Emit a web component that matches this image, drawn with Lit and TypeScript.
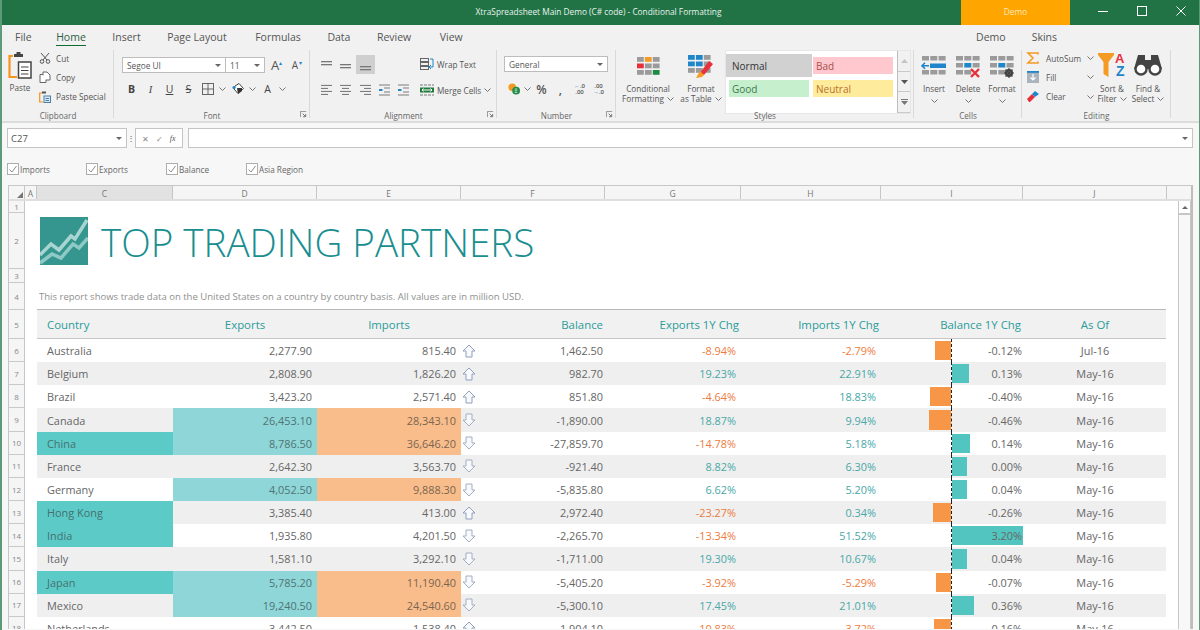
import { LitElement, html, css, svg } from "lit";
import { customElement } from "lit/decorators.js";

const G = "#9b9b9b", B = "#1f86c9", O = "#f59a23", R = "#e8303a", N = "#1e8a45";

function cells(colors: string[][], x = 0, y = 0, w = 7, h = 5, gx = 1.2, gy = 1.6) {
  return colors.map((row, r) => row.map((c, i) =>
    c ? svg`<rect x=${x + i * (w + gx)} y=${y + r * (h + gy)} width=${w} height=${h} fill=${c}></rect>` : ""));
}
const chev = html`<svg class="chev" viewBox="0 0 7 4"><path d="M.5.5 3.5 3.5 6.5.5" fill="none" stroke="#666" stroke-width=".9"/></svg>`;
const launcher = html`<svg class="launch" viewBox="0 0 8 8"><path d="M.5 7V.5H7" fill="none" stroke="#888"/><path d="M3 3l3 3M6.5 3.5v3h-3" fill="none" stroke="#666"/></svg>`;
const drop = html`<svg class="drop" viewBox="0 0 6 3"><path d="M0 0h6L3 3z" fill="#666"/></svg>`;

function alignIcon(kind: string) {
  const ys = [1.5, 4.5, 7.5, 10.5];
  const w = [11, 7, 11, 7];
  return html`<svg class="a11" viewBox="0 0 11 12">${ys.map((y, i) => {
    const x = kind === "l" ? 0 : kind === "r" ? 11 - w[i] : (11 - w[i]) / 2;
    return svg`<rect x=${x} y=${y - .6} width=${w[i]} height="1.1" fill="#7d7d7d"></rect>`;
  })}</svg>`;
}
function vAlign(y: number) {
  return html`<svg class="a11" viewBox="0 0 11 12"><rect x="0" y=${y} width="11" height="1.3" fill="#777"></rect><rect x="0" y=${y + 3} width="11" height="1.3" fill="#777"></rect></svg>`;
}
const indentIcon = html`<svg class="a11" viewBox="0 0 11 12"><path d="M0 1h11M0 11h11M5 4h6M5 8h6" stroke="#7d7d7d"/><path d="M0 6h3.500" stroke="#1f86c9" stroke-width="2"/></svg>`;

const icons = {
  paste: html`<svg class="paste" viewBox="0 0 24 27"><path d="M5 4H1.500v21H9" fill="none" stroke="#f7941d" stroke-width="2.200"/><path d="M6 5V2h2.500V0h4v2H15v3z" fill="#444"/><rect x="10.500" y="10" width="12.500" height="16" fill="#fff" stroke="#444" stroke-width="1.500"/><path d="M13 15h7.500M13 18.500h7.500M13 22h7.500" stroke="#444" stroke-width="1.200"/></svg>`,
  cut: html`<svg class="i12" viewBox="0 0 12 12"><path d="M2 1l6 7M10 1L4 8" stroke="#555" fill="none"/><circle cx="3" cy="9.500" r="1.800" fill="none" stroke="#555"/><circle cx="9" cy="9.500" r="1.800" fill="none" stroke="#555"/></svg>`,
  copy: html`<svg class="i12" viewBox="0 0 12 12"><path d="M4 1h4l3 3v5H4z" fill="#fff" stroke="#666"/><path d="M4 3.500H1v8h6V9" fill="#fff" stroke="#666"/></svg>`,
  pasteS: html`<svg class="i12" viewBox="0 0 12 12"><path d="M3 2H.7v9H4" fill="none" stroke="#f7941d" stroke-width="1.200"/><rect x="3" y=".5" width="4" height="2" fill="#555"/><rect x="5" y="5" width="6.500" height="6.500" fill="#d7e9f6" stroke="#4c7fa6"/><path d="M6.500 7.500h3.500M6.500 9.500h3.500" stroke="#4c7fa6"/></svg>`,
  borders: html`<svg class="i12" viewBox="0 0 12 12"><rect x=".5" y=".5" width="11" height="11" fill="none" stroke="#666"/><path d="M6 .5v11M.5 6h11" stroke="#666"/></svg>`,
  fill: html`<svg class="i12" viewBox="0 0 12 12"><path d="M3 3l4-2.500 4.500 5L6 10.500 2 6z" fill="#fff" stroke="#444"/><path d="M5 5h5v3l-4 3z" fill="#333"/><circle cx="2" cy="4.500" r="1.600" fill="#1f86c9"/></svg>`,
  wrap: html`<svg class="i14" viewBox="0 0 14 12"><rect x=".5" y=".5" width="8" height="3" fill="none" stroke="#666"/><rect x=".5" y="4.500" width="8" height="3" fill="none" stroke="#666"/><rect x=".5" y="8.500" width="8" height="3" fill="none" stroke="#666"/><path d="M10 1h3v8H9.500" fill="none" stroke="#1f86c9"/><path d="M11 7l-2 2 2 2" fill="none" stroke="#1f86c9"/></svg>`,
  merge: html`<svg class="i14" viewBox="0 0 14 12"><path d="M0 1h14M0 11h14" stroke="#777" stroke-dasharray="3 1"/><rect x="0" y="3.500" width="14" height="5" fill="#1e7d3d"/><path d="M3 6h8" stroke="#fff"/><path d="M3.500 4.500L2 6l1.500 1.500M10.500 4.500L12 6l-1.500 1.500" fill="none" stroke="#fff"/></svg>`,
  money: html`<svg class="i14" viewBox="0 0 14 14"><circle cx="5" cy="5" r="4.500" fill="#f59a23"/><circle cx="9.500" cy="9" r="4.500" fill="#1e8a45"/><path d="M7.800 7h3M7.800 9h3M7.800 11h3" stroke="#fff" stroke-width=".8"/></svg>`,
  cond: html`<svg class="big" viewBox="0 0 26 24"><g>${cells([[G, O, G], [R, G, G], [G, G, N]], 2, 3, 6.800, 4.800, 1.100, 1.700)}</g></svg>`,
  table: html`<svg class="big" viewBox="0 0 26 24"><g>${cells([[B, B, G], [B, B, G], [G, G, G]], 0, 1, 6.800, 4.800, 1.100, 1.700)}</g><path d="M12 19l9-12 4 3-9 11z" fill="#e8303a"/><path d="M12 17l4 4-2 2-6 1z" fill="#f59a23"/></svg>`,
  insert: html`<svg class="big" viewBox="0 0 26 24"><g>${cells([[G, G, G], ["", "", ""], [G, G, G]], 1, 2, 7, 4.500, 1.300, 2.500)}</g><rect x="9" y="9.500" width="16" height="4.500" fill="#1f86c9"/><path d="M1 11.800h7M4 8.800l-3 3 3 3" fill="none" stroke="#1f86c9" stroke-width="1.600"/></svg>`,
  del: html`<svg class="big" viewBox="0 0 26 24"><g>${cells([[G, G, G], [G, B, G], [G, G, ""]], 1, 2, 7, 4.500, 1.300, 2.500)}</g><path d="M16 15l8 8M24 15l-8 8" stroke="#e8303a" stroke-width="2.400"/></svg>`,
  fmt: html`<svg class="big" viewBox="0 0 26 24"><g>${cells([[G, G, G], [G, B, G], [G, G, ""]], 1, 2, 7, 4.500, 1.300, 2.500)}</g><circle cx="20" cy="19" r="3" fill="none" stroke="#444" stroke-width="2.200"/><path d="M20 14v10M15 19h10M16.500 15.500l7 7M23.500 15.500l-7 7" stroke="#444" stroke-width="1.200"/></svg>`,
  sum: html`<svg class="i14" viewBox="0 0 14 12"><path d="M12 2.500V1H2l5 5-5 5h10V9.500" fill="none" stroke="#f59a23" stroke-width="1.600"/></svg>`,
  fillD: html`<svg class="i14" viewBox="0 0 14 12"><rect x="1" y="0" width="12" height="12" fill="#a9b4bd"/><rect x="1" y="0" width="12" height="1.800" fill="#1f86c9"/><path d="M7 3v6M4.500 6.500 7 9l2.500-2.500" fill="none" stroke="#fff" stroke-width="1.200"/></svg>`,
  clear: html`<svg class="i14" viewBox="0 0 14 12"><path d="M1 8l5-5 3 3-5 5H3z" fill="#e8303a"/><path d="M6 3l3-3 4 3-4 3z" fill="#1f86c9"/></svg>`,
  sort: html`<svg class="big-w" viewBox="0 0 28 26"><path d="M0 0h16v2l-5.500 7v15l-5-3V9L0 2z" fill="#f59a23" transform="translate(0 1)"/><text x="17" y="11" class="sa">A</text><text x="18" y="24" class="sz">Z</text></svg>`,
  find: html`<svg class="big-w" viewBox="0 0 28 26"><path d="M4 3h7v5h6V3h7l4 14H0z" fill="#444"/><circle cx="7" cy="17" r="5.500" fill="#fff" stroke="#444" stroke-width="2.400"/><circle cx="21" cy="17" r="5.500" fill="#fff" stroke="#444" stroke-width="2.400"/></svg>`,
  logo: html`<svg class="logo" viewBox="0 0 48 48"><rect width="48" height="48" fill="#35968f"/><path d="M0 38l11-11 8 6L31 19l4 3L47 3" fill="none" stroke="#a8d5d2" stroke-width="3.500"/><path d="M0 46l12-9 9 4 12-14 6 4 9-10" fill="none" stroke="#8fc9c5" stroke-width="3.500"/></svg>`,
  up: html`<svg class="arr" viewBox="0 0 14 14"><path d="M7 1l6 6h-3v6H4V7H1z" fill="#f7f9fc" stroke="#8fa0bd"/></svg>`,
  down: html`<svg class="arr" viewBox="0 0 14 14"><path d="M7 13l6-6h-3V1H4v6H1z" fill="#f7f9fc" stroke="#a3aec2"/></svg>`,
  check: html`<svg viewBox="0 0 12 12" class="ck"><rect x=".5" y=".5" width="11" height="11" fill="#fff" stroke="#adadad"/><path d="M2.500 6.500 5 9l4.500-6" fill="none" stroke="#8c8c8c"/></svg>`,
};

type Row = [string, string, string, boolean, string, string, string, string, string];
const DATA: Row[] = [
  ["Australia", "2,277.90", "815.40", true, "1,462.50", "-8.94%", "-2.79%", "-0.12%", "Jul-16"],
  ["Belgium", "2,808.90", "1,826.20", true, "982.70", "19.23%", "22.91%", "0.13%", "May-16"],
  ["Brazil", "3,423.20", "2,571.40", true, "851.80", "-4.64%", "18.83%", "-0.40%", "May-16"],
  ["Canada", "26,453.10", "28,343.10", false, "-1,890.00", "18.87%", "9.94%", "-0.46%", "May-16"],
  ["China", "8,786.50", "36,646.20", false, "-27,859.70", "-14.78%", "5.18%", "0.14%", "May-16"],
  ["France", "2,642.30", "3,563.70", false, "-921.40", "8.82%", "6.30%", "0.00%", "May-16"],
  ["Germany", "4,052.50", "9,888.30", false, "-5,835.80", "6.62%", "5.20%", "0.04%", "May-16"],
  ["Hong Kong", "3,385.40", "413.00", true, "2,972.40", "-23.27%", "0.34%", "-0.26%", "May-16"],
  ["India", "1,935.80", "4,201.50", false, "-2,265.70", "-13.34%", "51.52%", "3.20%", "May-16"],
  ["Italy", "1,581.10", "3,292.10", false, "-1,711.00", "19.30%", "10.67%", "0.04%", "May-16"],
  ["Japan", "5,785.20", "11,190.40", false, "-5,405.20", "-3.92%", "-5.29%", "-0.07%", "May-16"],
  ["Mexico", "19,240.50", "24,540.60", false, "-5,300.10", "17.45%", "21.01%", "0.36%", "May-16"],
  ["Netherlands", "3,442.50", "1,538.40", true, "1,904.10", "-10.83%", "-3.72%", "-0.16%", "May-16"],
];
const TEAL_C = new Set(["China", "Hong Kong", "India", "Japan"]);
const HOT = new Set(["Canada", "China", "Germany", "Japan", "Mexico"]);
const BAR: Record<string, number> = { Australia: -16, Belgium: 17, Brazil: -21, Canada: -22, China: 18, France: 15, Germany: 15, "Hong Kong": -18, India: 71, Italy: 15, Japan: -15, Mexico: 22, Netherlands: -17 };

@customElement("app-root")
export class AppRoot extends LitElement {
  static styles = css`
    :host { display: block; width: 1200px; height: 630px; overflow: hidden; font-family: "Open Sans", "Noto Sans", sans-serif; color: #555; background: #f7f7f7; }
    * { box-sizing: border-box; }
    svg { display: block; flex: none; }
    .app { width: 1200px; height: 630px; display: flex; flex-direction: column; border-left: 2px solid #5d9a79; border-right: 1px solid #5d9a79; overflow: hidden; }
    .titlebar { height: 25px; flex: none; margin: 0 -1px 0 -2px; background: #217346; color: #e8f3ec; display: flex; font-size: 8.300px; }
    .ttl { width: 961px; padding: 0 0 3px 236px; display: flex; align-items: center; justify-content: center; white-space: nowrap; }
    .demo { width: 109px; background: #ffa500; color: #fde7bd; display: flex; align-items: center; justify-content: center; padding-bottom: 3px; }
    .winbtns { flex: 1; display: grid; grid-template-columns: repeat(3, 39px); justify-items: center; align-items: center; padding: 0 0 3px 13px; }
    .winbtns svg { width: 10px; height: 10px; }
    .tabs { height: 25px; flex: none; background: #f1f1f1; display: flex; align-items: flex-start; padding: 4px 0 0 13px; gap: 26.500px; font-size: 10.500px; color: #555; }
    .tab { height: 18px; line-height: 16px; white-space: nowrap; }
    .tab.on { color: #2f5e45; border-bottom: 1.500px solid #0c6b2d; height: 17px; margin-left: -2px; }
    .tab.mr { margin-left: 2px; }
    .tabsr { margin-left: auto; display: flex; gap: 26px; margin-right: 142px; }
    .ribbon { height: 73px; flex: none; background: #f1f1f1; border-bottom: 2px solid #dcdcdc; display: flex; font-size: 8.200px; }
    .grp { position: relative; display: flex; flex-direction: column; flex: none; }
    .grp::after { content: ""; position: absolute; right: 0; top: 0; height: 68px; width: 1px; background: #d9d9d9; }
    .gb { height: 60px; display: flex; flex: none; }
    .gl { text-align: center; font-size: 8.100px; color: #666; line-height: 12px; }
    .launch { position: absolute; right: 3px; bottom: 3px; width: 7px; height: 7px; }
    .g1 { width: 112px; } .g2 { width: 196px; } .g3 { width: 187px; } .g4 { width: 119px; } .g5 { width: 298px; } .g6 { width: 108px; } .g7 { width: 149px; }
    .bigbtn { display: flex; flex-direction: column; align-items: center; line-height: 10px; text-align: center; white-space: nowrap; }
    .bl { display: flex; align-items: center; gap: 3px; justify-content: center; }
    .paste { width: 24px; height: 27px; margin-top: 2px; }
    .big { width: 26px; height: 24px; margin-top: 4px; }
    .big-w { width: 28px; height: 26px; margin-top: 2px; overflow: visible; }
    .bt { margin-top: 6px; }
    .bt2 { margin-top: 5px; }
    .chev { width: 7px; height: 4px; }
    .i12 { width: 12px; height: 12px; } .i14 { width: 14px; height: 12px; } .a11 { width: 11px; height: 12px; }
    .g1 .gb { padding-left: 6px; }
    .pastebtn { width: 24px; } .pastebtn .bt { margin-top: 4px; }
    .smallcol { margin-left: 7px; display: flex; flex-direction: column; padding-top: 2px; gap: 7.300px; }
    .sm { display: flex; align-items: center; gap: 5px; height: 12px; white-space: nowrap; }
    .g2 .gb { flex-direction: column; padding: 7px 0 0 8px; }
    .rowf { display: flex; align-items: center; }
    .combo { height: 16px; background: #fff; border: 1px solid #bdbdbd; display: flex; align-items: center; justify-content: space-between; padding: 0 4px; font-size: 8.300px; color: #555; }
    .drop { width: 6px; height: 3px; }
    .c1 { width: 104px; } .c2 { width: 40px; margin-left: -1px; } .c3 { width: 104px; }
    .ga { font-size: 13px; width: 20px; text-align: center; color: #555; line-height: 16px; position: relative; }
    .ga1 { margin-left: 0; } .ga2 { font-size: 10px; }
    .ga sup { position: absolute; font-size: 6px; color: #1f86c9; top: -2px; right: 3px; }
    .row2f { margin-top: 9px; height: 14px; }
    .tb { width: 19px; display: flex; justify-content: center; align-items: center; font-size: 10.500px; color: #444; flex: none; }
    .tb.b { font-weight: 700; } .tb.it { font-style: italic; font-family: "Liberation Serif", serif; } .tb.u { text-decoration: underline; } .tb.s { text-decoration: line-through; }
    .tc { width: 9px; display: flex; justify-content: center; flex: none; }
    .g2 .tc { width: 11px; }
    .g3 .gb { padding: 5px 0 0 7px; gap: 28px; }
    .agrid { display: grid; grid-template-columns: repeat(5, 19.300px); grid-template-rows: 19px 19px; row-gap: 6px; width: 96px; justify-items: center; align-items: center; height: 45px; }
    .agrid .sel { width: 19px; height: 19px; background: #cfcfcf; display: flex; justify-content: center; align-items: center; }
    .acol { display: flex; flex-direction: column; gap: 14px; padding-top: 3px; margin-left: -21px; }
    .acol .sm { gap: 3px; }
    .g4 .gb { flex-direction: column; padding: 6px 0 0 7px; }
    .nrow { margin-top: 10px; height: 14px; display: flex; align-items: center; font-size: 12px; color: #555; }
    .nb { width: 19px; display: flex; justify-content: center; font-weight: 600; flex: none; }
    .dec { font-size: 6px; line-height: 6.500px; text-align: center; color: #555; font-weight: 600; }
    .dec b { color: #1f86c9; }
    .g5 .gb { height: 63px; padding-left: 4px; }
    .g5 .gl { margin-top: -3px; }
    .b55 { width: 56px; } .b50 { width: 50px; }
    .gallery { width: 186px; height: 64px; background: #fff; margin: 0 0 0 -1px; display: flex; flex: none; border: 1px solid #e6e6e6; }
    .swatches { width: 172px; display: grid; grid-template-columns: 86px 80px; grid-template-rows: 26px 20px; padding-top: 3px; column-gap: 1px; }
    .sw { font-size: 10px; display: flex; align-items: center; padding-left: 3px; margin: 3px 0 3px 0; height: 17px; }
    .sw.n { background: #d1d1d1; color: #333; margin: 0; height: 23px; padding-left: 6px; }
    .sw.ba { background: #ffc7ce; color: #a9504d; }
    .sw.go { background: #c6efce; color: #3d7a4a; margin: 0 0 0 3px; width: 80px; }
    .sw.ne { background: #ffeb9c; color: #b4712a; margin: 0; }
    .gscroll { width: 13px; margin-left: 0; display: flex; flex-direction: column; border-left: 1px solid #bdbdbd; background: #f1f1f1; }
    .gs { flex: 1; display: flex; justify-content: center; align-items: center; border-bottom: 1px solid #c9c9c9; }
    .gs svg { width: 7px; height: 6px; }
    .g6 .gb { padding-left: 3px; }
    .b34 { width: 34px; }
    .g7 .gb { padding-left: 2px; }
    .editcol { width: 70px; display: flex; flex-direction: column; gap: 7.300px; padding-top: 2px; padding-left: 2px; }
    .editcol .sm { gap: 6px; }
    .editcol .lab { width: 35px; }
    .b36 { width: 36px; }
    .sa { font: 700 13px "Liberation Sans", sans-serif; fill: #e8303a; }
    .sz { font: 700 14px "Liberation Sans", sans-serif; fill: #1f86c9; }
    .fbar { height: 32px; flex: none; display: flex; align-items: flex-start; padding: 5px 6px 0 5px; background: #f7f7f7; }
    .fbox { height: 20px; background: #fff; border: 1px solid #c4c4c4; display: flex; align-items: center; }
    .name { width: 120px; padding: 0 4px 0 3px; justify-content: space-between; font-size: 9.500px; }
    .dots { width: 8px; color: #555; font-size: 8px; text-align: center; line-height: 20px; }
    .fx { width: 48px; justify-content: space-around; padding: 0 3px; color: #888; font-size: 8px; }
    .fx i { font-family: "Liberation Serif", serif; color: #555; }
    .input { flex: 1; margin-left: 5px; justify-content: flex-end; padding-right: 4px; }
    .checks { height: 30px; flex: none; display: flex; padding: 8px 0 0 5px; font-size: 8.200px; color: #666; background: #f7f7f7; }
    .chk { display: flex; align-items: center; gap: 1px; height: 12px; flex: none; }
    .ck { width: 12px; height: 12px; }
    .w78 { width: 79px; } .w80 { width: 80px; }
    .sheet { margin-left: 6px; width: 1185px; height: 444px; flex: none; display: flex; flex-direction: column; overflow: hidden; border-left: 1px solid #c6c6c6; border-right: 2px solid #bdbdbd; border-top: 1px solid #c6c6c6; background: #fff; }
    .gridcols { display: grid; grid-template-columns: 16px 12px 136px 144px 144px 144px 136px 140px 142px 144px 1fr; }
    .colh { height: 15px; flex: none; background: #f5f5f5; border-bottom: 2px solid #dfdfdf; font-size: 8.500px; color: #777; text-align: center; line-height: 15px; }
    .colh > div { border-right: 1px solid #c6c6c6; height: 13px; }
    .colh > div:last-child { border-right: 0; }
    .colh .on { background: #e2e2e2; }
    .corner { position: relative; }
    .corner svg { position: absolute; right: 1px; bottom: 1px; width: 6px; height: 6px; }
    .sbody { flex: 1; display: flex; min-height: 0; position: relative; }
    .rows { flex: 1; min-width: 0; overflow: hidden; }
    .r { display: grid; grid-template-columns: 16px 12px 136px 144px 144px 144px 136px 140px 142px 144px; }
    .rh { background: #f5f5f5; border-right: 1px solid #c6c6c6; border-bottom: 1px solid #c9c9c9; color: #888; font-size: 8px; display: flex; align-items: center; justify-content: center; }
    .r1 { height: 12px; } .r2 { height: 56px; } .r3 { height: 14px; } .r4 { height: 27px; } .r5 { height: 29px; }
    .titlewrap { grid-column: 2 / -1; display: flex; align-items: center; padding-left: 15px; gap: 13px; }
    .logo { width: 48px; height: 48px; }
    .bigt { font-size: 38.600px; font-weight: 300; color: #188e91; white-space: nowrap; line-height: 48px; padding-top: 1px; }
    .desc { grid-column: 2 / -1; padding-left: 14px; font-size: 9.540px; color: #8f8f8f; display: flex; align-items: center; white-space: nowrap; position: relative; }
    .desc::after { content: ""; position: absolute; left: 12px; right: 0; bottom: 0; height: 1.500px; background: #b8b8b8; }
    .hcell { background: #f1f1f1; border-bottom: 1.500px solid #c6c6c6; color: #2a9c99; font-size: 11.400px; font-weight: 500; display: flex; align-items: center; white-space: nowrap; padding-top: 1px; }
    .hcell.c { justify-content: center; } .hcell.e { justify-content: flex-end; padding-right: 2px; }
    .hcell.l { padding-left: 10px; }
    .dr { height: 23.170px; font-size: 10.900px; color: #666; }
    .dr .d { display: flex; align-items: center; white-space: nowrap; background: #fff; padding-right: 5px; justify-content: flex-end; position: relative; }
    .dr.alt .d { background: #efefef; }
    .dr .d.cty { justify-content: flex-start; padding-left: 10px; padding-right: 0; }
    .dr .d.cen { justify-content: center; padding: 0; }
    .dr .d.ctyhot { background: #5ccbc8; color: #44706f; }
    .dr .d.dh { background: #8fd6d8; color: #4e7473; }
    .dr .d.eh { background: #f9bd8b; color: #7a6550; }
    .dr .d.bal { padding-right: 2px; justify-content: space-between; }
    .arr { width: 14px; height: 14px; margin-left: 1px; }
    .neg { color: #ee7a3c !important; } .pos { color: #48a7a7 !important; }
    .bar { position: absolute; top: 2px; bottom: 2px; background: #52c5c0; }
    .bar.n { background: #f79646; }
    .axis { position: absolute; top: 0; bottom: 0; left: 70px; width: 0; border-left: 1px dashed #222; }
    .dr .d.i { padding-right: 1px; }
    .dr .t { position: relative; }
    .vs { width: 13px; flex: none; border-left: 1px solid #c6c6c6; border-right: 1px solid #c6c6c6; background: #f8f8f8; }
    .vsb { height: 14px; background: #fff; border-bottom: 2px solid #c6c6c6; display: flex; align-items: center; justify-content: center; }
    .vsb svg { width: 6px; height: 3px; }
    .gutter { width: 12px; flex: none; background: #fff; }
  `;

  private cols() {
    return ["", "A", "C", "D", "E", "F", "G", "H", "I", "J", ""];
  }

  render() {
    return html`<div class="app">
      <div class="titlebar">
        <div class="ttl">XtraSpreadsheet Main Demo (C# code) - Conditional Formatting</div>
        <div class="demo">Demo</div>
        <div class="winbtns">
          <svg viewBox="0 0 10 10"><path d="M0 5.500h10" stroke="#fff"/></svg>
          <svg viewBox="0 0 10 10"><rect x=".5" y=".5" width="9" height="9" fill="none" stroke="#fff"/></svg>
          <svg viewBox="0 0 10 10"><path d="M.5.5l9 9M9.500.5l-9 9" stroke="#fff"/></svg>
        </div>
      </div>
      <div class="tabs">
        <div class="tab">File</div><div class="tab on">Home</div><div class="tab">Insert</div><div class="tab">Page Layout</div>
        <div class="tab mr">Formulas</div><div class="tab">Data</div><div class="tab">Review</div><div class="tab mr">View</div>
        <div class="tabsr"><div class="tab">Demo</div><div class="tab">Skins</div></div>
      </div>
      ${this.ribbon()}
      <div class="fbar">
        <div class="fbox name"><span>C27</span>${drop}</div>
        <div class="dots">⋮</div>
        <div class="fbox fx"><span>✕</span><span>✓</span><i>fx</i></div>
        <div class="fbox input">${drop}</div>
      </div>
      <div class="checks">
        <div class="chk w78">${icons.check}Imports</div>
        <div class="chk w80">${icons.check}Exports</div>
        <div class="chk w80">${icons.check}Balance</div>
        <div class="chk">${icons.check}Asia Region</div>
      </div>
      <div class="sheet">
        <div class="colh gridcols">
          ${this.cols().map((c, i) => html`<div class=${i === 2 ? "on" : i === 0 ? "corner" : ""}>${i === 0 ? html`<svg viewBox="0 0 6 6"><path d="M6 0v6H0z" fill="#777"/></svg>` : c}</div>`)}
        </div>
        <div class="sbody">
          <div class="rows">
            <div class="r r1"><div class="rh">1</div></div>
            <div class="r r2"><div class="rh">2</div><div class="titlewrap">${icons.logo}<div class="bigt">TOP TRADING PARTNERS</div></div></div>
            <div class="r r3"><div class="rh">3</div></div>
            <div class="r r4"><div class="rh">4</div><div class="desc">This report shows trade data on the United States on a country by country basis. All values are in million USD.</div></div>
            <div class="r r5"><div class="rh">5</div><div></div>
              <div class="hcell l">Country</div><div class="hcell c">Exports</div><div class="hcell c">Imports</div>
              <div class="hcell e">Balance</div><div class="hcell e">Exports 1Y Chg</div><div class="hcell e">Imports 1Y Chg</div>
              <div class="hcell e">Balance 1Y Chg</div><div class="hcell c">As Of</div>
            </div>
            ${DATA.map((d, i) => this.dataRow(d, i))}
          </div>
          <div class="gutter"></div>
          <div class="vs"><div class="vsb"><svg viewBox="0 0 6 3"><path d="M0 3h6L3 0z" fill="#666"/></svg></div></div>
        </div>
      </div>
    </div>`;
  }

  private dataRow(d: Row, i: number) {
    const [name, ex, im, up, bal, e1, i1, b1, as] = d;
    const hot = HOT.has(name);
    const w = BAR[name];
    const pc = (v: string) => (v.startsWith("-") ? "neg" : "pos");
    return html`<div class="r dr ${i % 2 ? "alt" : ""}">
      <div class="rh">${i + 6}</div><div></div>
      <div class="d cty ${TEAL_C.has(name) ? "ctyhot" : ""}">${name}</div>
      <div class="d ${hot ? "dh" : ""}">${ex}</div>
      <div class="d ${hot ? "eh" : ""}">${im}</div>
      <div class="d bal">${up ? icons.up : icons.down}<span>${bal}</span></div>
      <div class="d ${pc(e1)}">${e1}</div>
      <div class="d ${pc(i1)}">${i1}</div>
      <div class="d i">
        <div class="bar ${w < 0 ? "n" : ""}" style="left:${w < 0 ? 70 + w : 71}px;width:${Math.abs(w)}px"></div>
        <div class="axis"></div>
        <span class="t">${b1}</span>
      </div>
      <div class="d cen">${as}</div>
    </div>`;
  }

  private ribbon() {
    const big = (ic: unknown, a: string, b: string, cls: string, arrowOnly = false) => html`<div class="bigbtn ${cls}">${ic}
      <div class="bt">${a}</div>${arrowOnly ? html`<div class="bl bt2">${chev}</div>` : html`<div class="bl">${b} ${chev}</div>`}</div>`;
    return html`<div class="ribbon">
      <div class="grp g1">
        <div class="gb">
          <div class="bigbtn pastebtn">${icons.paste}<div class="bt">Paste</div></div>
          <div class="smallcol">
            <div class="sm">${icons.cut}Cut</div>
            <div class="sm">${icons.copy}Copy</div>
            <div class="sm">${icons.pasteS}Paste Special</div>
          </div>
        </div>
        <div class="gl">Clipboard</div>
      </div>
      <div class="grp g2">
        <div class="gb">
          <div class="rowf">
            <div class="combo c1">Segoe UI${drop}</div>
            <div class="combo c2">11${drop}</div>
            <div class="ga ga1">A<sup>▴</sup></div><div class="ga ga2">A<sup>▾</sup></div>
          </div>
          <div class="rowf row2f">
            <div class="tb b">B</div><div class="tb it">I</div><div class="tb u">U</div><div class="tb s">S</div>
            <div class="tb">${icons.borders}</div><div class="tc">${chev}</div>
            <div class="tb">${icons.fill}</div><div class="tc">${chev}</div>
            <div class="tb">A</div><div class="tc">${chev}</div>
          </div>
        </div>
        <div class="gl">Font</div>${launcher}
      </div>
      <div class="grp g3">
        <div class="gb">
          <div class="agrid">
            ${vAlign(2)}${vAlign(5)}<div class="sel">${vAlign(7)}</div><span></span><span></span>
            ${alignIcon("l")}${alignIcon("c")}${alignIcon("r")}${indentIcon}${indentIcon}
          </div>
          <div class="acol">
            <div class="sm">${icons.wrap}Wrap Text</div>
            <div class="sm">${icons.merge}Merge Cells ${chev}</div>
          </div>
        </div>
        <div class="gl">Alignment</div>${launcher}
      </div>
      <div class="grp g4">
        <div class="gb">
          <div class="combo c3">General${drop}</div>
          <div class="nrow">
            <div class="nb">${icons.money}</div><div class="tc">${chev}</div>
            <div class="nb">%</div><div class="nb">,</div>
            <div class="nb dec"><div><b>←</b>.0<br/>.00</div></div>
            <div class="nb dec"><div>.00<br/><b>→</b>.0</div></div>
          </div>
        </div>
        <div class="gl">Number</div>${launcher}
      </div>
      <div class="grp g5">
        <div class="gb">
          ${big(icons.cond, "Conditional", "Formatting", "b55")}
          ${big(icons.table, "Format", "as Table", "b50")}
          <div class="gallery">
            <div class="swatches">
              <div class="sw n">Normal</div><div class="sw ba">Bad</div>
              <div class="sw go">Good</div><div class="sw ne">Neutral</div>
            </div>
            <div class="gscroll">
              <div class="gs"><svg viewBox="0 0 7 6"><path d="M0 5h7L3.500 1z" fill="#c4c4c4"/></svg></div>
              <div class="gs"><svg viewBox="0 0 7 6"><path d="M0 1h7L3.500 5z" fill="#555"/></svg></div>
              <div class="gs"><svg viewBox="0 0 7 6"><path d="M0 0h7v1H0zM0 2h7L3.500 6z" fill="#777"/></svg></div>
            </div>
          </div>
        </div>
        <div class="gl">Styles</div>
      </div>
      <div class="grp g6">
        <div class="gb">
          ${big(icons.insert, "Insert", "", "b34", true)}
          ${big(icons.del, "Delete", "", "b34", true)}
          ${big(icons.fmt, "Format", "", "b34", true)}
        </div>
        <div class="gl">Cells</div>
      </div>
      <div class="grp g7">
        <div class="gb">
          <div class="editcol">
            <div class="sm">${icons.sum}<span class="lab">AutoSum</span>${chev}</div>
            <div class="sm">${icons.fillD}<span class="lab">Fill</span>${chev}</div>
            <div class="sm">${icons.clear}<span class="lab">Clear</span>${chev}</div>
          </div>
          ${big(icons.sort, "Sort &", "Filter", "b36")}
          ${big(icons.find, "Find &", "Select", "b36")}
        </div>
        <div class="gl">Editing</div>
      </div>
    </div>`;
  }
}
